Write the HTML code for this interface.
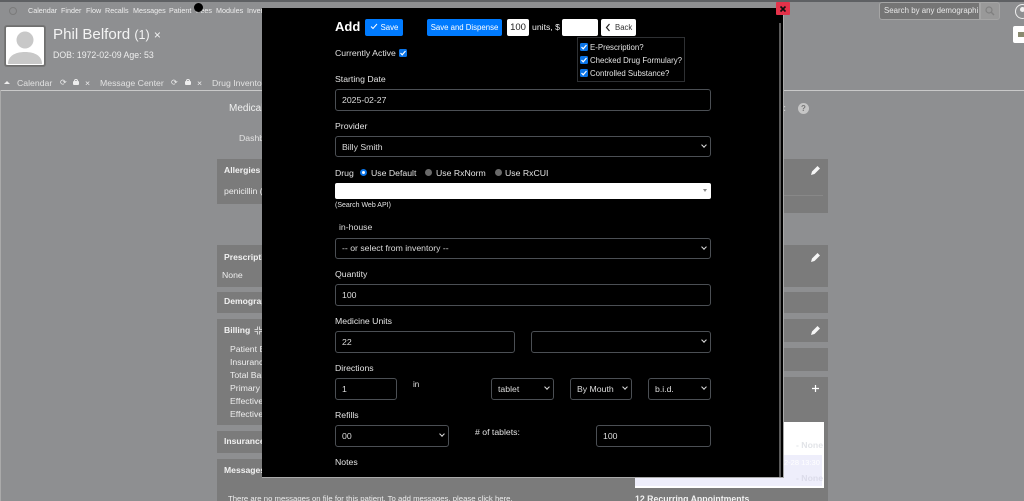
<!DOCTYPE html>
<html><head><meta charset="utf-8"><style>
*{box-sizing:border-box}
html,body{margin:0;padding:0;width:1024px;height:501px;overflow:hidden}
body{position:relative;background:#8e8f91;font-family:"Liberation Sans",sans-serif;font-size:8.7px;color:#e8e8e8}
.a{position:absolute}
.t{position:absolute;white-space:nowrap;line-height:16px;height:16px}
.p{position:absolute;background:#7b7b7b}
.n{font-size:7.2px;color:#eee}
.b{font-weight:bold;color:#f2f2f2;font-size:8.6px}
#m{position:absolute;left:262px;top:8px;width:521px;height:469px;background:#000;overflow:hidden;color:#e4e4e4;font-size:8.7px}
#m .f{position:absolute;border:1px solid #4b4f54;border-radius:3px;background:#000;color:#ddd;line-height:20px;padding-left:6px;font-size:8.7px;height:22px;white-space:nowrap}
#m .s::after{content:"";position:absolute;right:4px;top:6px;width:3px;height:3px;border-right:1px solid #ddd;border-bottom:1px solid #ddd;transform:rotate(45deg)}
.btn{position:absolute;background:#007bff;color:#fff;border-radius:2px;font-size:7.8px;text-align:center;height:17px;line-height:17px;white-space:nowrap}
.w{position:absolute;background:#fff;color:#222;border-radius:2px}
.c{position:absolute;width:8px;height:8px;background:#0a74e8;border-radius:1.5px}
.c svg{position:absolute;left:0;top:0}
.r{position:absolute;width:7px;height:7px;border-radius:50%;background:#6a6a6a}
</style></head><body>
<!-- background page -->
<div class="a" style="left:0;top:0;width:1024px;height:2px;background:#5e6063"></div>
<div class="a" style="left:9px;top:7px;width:8px;height:8px;border-radius:50%;border:1px solid #7b7b7b"></div>
<div class="t n" style="left:28px;top:3px">Calendar</div>
<div class="t n" style="left:61px;top:3px">Finder</div>
<div class="t n" style="left:86px;top:3px">Flow</div>
<div class="t n" style="left:105px;top:3px">Recalls</div>
<div class="t n" style="left:133px;top:3px">Messages</div>
<div class="t n" style="left:169px;top:3px">Patient</div>
<div class="t n" style="left:196px;top:3px">Fees</div>
<div class="t n" style="left:216px;top:3px">Modules</div>
<div class="t n" style="left:247px;top:3px">Inventory</div>
<div class="a" style="left:194px;top:3px;width:9px;height:9px;border-radius:50%;background:#000"></div>

<div class="a" style="left:5px;top:26px;width:40px;height:40px;background:#fff;border:1px solid #6f6f6f;border-radius:2px;overflow:hidden;box-shadow:0 0 0 1px #777">
<svg width="38" height="38" viewBox="0 0 38 38"><circle cx="19" cy="13" r="8.5" fill="#c8c8c8"/><path d="M2 37C2 29 9 25 19 25S36 29 36 37Z" fill="#c8c8c8"/></svg></div>
<div class="t" style="left:53px;top:25px;height:20px;line-height:20px;font-size:15.1px;color:#f4f4f4">Phil Belford <span style="font-size:12.5px">(1)</span> <span style="font-size:12px">×</span></div>
<div class="t" style="left:53px;top:47px;font-size:8.75px;color:#eee">DOB: 1972-02-09 Age: 53</div>

<div class="a" style="left:4px;top:81px;width:0;height:0;border-left:3px solid transparent;border-right:3px solid transparent;border-bottom:3px solid #eee"></div>
<div class="t" style="left:17px;top:75px;color:#e2e2e2">Calendar</div>
<div class="t" style="left:60px;top:75px;font-size:8px;color:#eee">⟳</div>
<div class="a" style="left:73px;top:81px;width:6px;height:4px;background:#eee;border-radius:1px"></div>
<div class="a" style="left:74px;top:79px;width:4px;height:3px;border:1px solid #eee;border-bottom:0;border-radius:2px 2px 0 0"></div>
<div class="t" style="left:85px;top:75px;color:#eee">×</div>
<div class="t" style="left:100px;top:75px;color:#e2e2e2">Message Center</div>
<div class="t" style="left:171px;top:75px;font-size:8px;color:#eee">⟳</div>
<div class="a" style="left:185px;top:81px;width:6px;height:4px;background:#eee;border-radius:1px"></div>
<div class="a" style="left:186px;top:79px;width:4px;height:3px;border:1px solid #eee;border-bottom:0;border-radius:2px 2px 0 0"></div>
<div class="t" style="left:197px;top:75px;color:#eee">×</div>
<div class="t" style="left:212px;top:75px;color:#e2e2e2">Drug Inventory</div>
<div class="a" style="left:0;top:90px;width:1024px;height:1px;background:#c9c9c9"></div>
<div class="a" style="left:0;top:90px;width:1px;height:411px;background:#aaa"></div>

<div class="t" style="left:229px;top:101px;font-size:10px;color:#f0f0f0">Medical</div>
<div class="t" style="left:239px;top:130px;color:#e4e4e4">Dashboard</div>

<div class="p" style="left:217px;top:159px;width:611px;height:45px"></div>
<div class="p" style="left:783px;top:204px;width:45px;height:9px"></div>
<div class="a" style="left:783px;top:195px;width:40px;height:1px;background:#888"></div>
<div class="t b" style="left:224px;top:162px">Allergies</div>
<div class="t" style="left:224px;top:183px;color:#eee">penicillin (</div>

<div class="p" style="left:217px;top:245px;width:611px;height:42px"></div>
<div class="t b" style="left:224px;top:249px">Prescriptions</div>
<div class="t" style="left:222px;top:267px;color:#eee">None</div>

<div class="p" style="left:217px;top:292px;width:611px;height:21px"></div>
<div class="t b" style="left:224px;top:293px">Demographics</div>

<div class="p" style="left:217px;top:319px;width:45px;height:106px"></div>
<div class="p" style="left:783px;top:319px;width:45px;height:23px"></div>
<div class="t b" style="left:224px;top:322px">Billing</div>
<svg class="a" style="left:254px;top:326px" width="9" height="9" viewBox="0 0 9 9"><path d="M0.5 3.5H3.5V0.5M5.5 0.5V3.5H8.5M0.5 5.5H3.5V8.5M5.5 8.5V5.5H8.5" stroke="#eee" fill="none" stroke-width="0.8"/></svg>
<div class="t" style="left:230px;top:341px;color:#eee">Patient Balance</div>
<div class="t" style="left:230px;top:354px;color:#eee">Insurance</div>
<div class="t" style="left:230px;top:367px;color:#eee">Total Balance</div>
<div class="t" style="left:230px;top:380px;color:#eee">Primary</div>
<div class="t" style="left:230px;top:393px;color:#eee">Effective</div>
<div class="t" style="left:230px;top:406px;color:#eee">Effective</div>

<div class="p" style="left:217px;top:431px;width:45px;height:22px"></div>
<div class="p" style="left:783px;top:348px;width:45px;height:23px"></div>
<div class="t b" style="left:224px;top:433px">Insurance</div>

<div class="p" style="left:217px;top:459px;width:418px;height:42px"></div>
<div class="t b" style="left:224px;top:462px">Messages</div>
<div class="t" style="left:228px;top:491px;color:#eee;font-size:7.75px">There are no messages on file for this patient. To add messages, please click here.</div>

<div class="p" style="left:635px;top:377px;width:193px;height:124px"></div>
<div class="a" style="left:635px;top:422px;width:189px;height:66px;background:#fff"></div>
<div class="a" style="left:635px;top:455px;width:187px;height:31px;background:#eeeefb"></div>
<div class="t" style="left:796px;top:437px;color:#e2e4e8;font-size:8.7px;font-weight:bold">- None</div>
<div class="t" style="left:796px;top:470px;color:#dcdcea;font-size:8.7px;font-weight:bold">- None</div>
<div class="t" style="left:784px;top:455px;color:#fff;font-size:7.5px">2-28 13:30</div>
<div class="t b" style="left:635px;top:491px;font-size:8.75px">12 Recurring Appointments</div>

<!-- pencils -->
<svg class="a" style="left:810px;top:165px" width="11" height="11" viewBox="0 0 11 11"><path d="M1 10L2 6.5L7.5 1L10 3.5L4.5 9Z" fill="#f6f6f6"/></svg>
<svg class="a" style="left:810px;top:252px" width="11" height="11" viewBox="0 0 11 11"><path d="M1 10L2 6.5L7.5 1L10 3.5L4.5 9Z" fill="#f6f6f6"/></svg>
<svg class="a" style="left:810px;top:325px" width="11" height="11" viewBox="0 0 11 11"><path d="M1 10L2 6.5L7.5 1L10 3.5L4.5 9Z" fill="#f6f6f6"/></svg>
<svg class="a" style="left:811px;top:384px" width="9" height="9" viewBox="0 0 9 9"><path d="M4.5 1V8M1 4.5H8" stroke="#fff" stroke-width="1.2"/></svg>
<div class="a" style="left:798px;top:103px;width:11px;height:11px;border-radius:50%;background:#c6c6c6;color:#777;font-size:8px;line-height:11px;text-align:center;font-weight:bold">?</div>
<div class="t" style="left:783px;top:100px;color:#ccc;font-size:9px;font-weight:bold">:</div>

<!-- search -->
<div class="a" style="left:879px;top:2px;width:101px;height:18px;background:#757575;border:1px solid #a5a5a5;border-radius:3px 0 0 3px;color:#e8e8e8;font-size:7.9px;line-height:16px;padding-left:4px;overflow:hidden;white-space:nowrap">Search by any demographi</div>
<div class="a" style="left:980px;top:2px;width:20px;height:18px;background:#999;border:1px solid #a5a5a5;border-radius:0 3px 3px 0"></div>
<svg class="a" style="left:985px;top:6px" width="10" height="10" viewBox="0 0 10 10"><circle cx="4" cy="4" r="3" fill="none" stroke="#808080" stroke-width="1.2"/><path d="M6 6L9 9" stroke="#808080" stroke-width="1.4"/></svg>
<div class="a" style="left:1015px;top:4px;width:15px;height:15px;border-radius:50%;border:1.5px solid #eee;background:#8e8f91"></div>
<div class="a" style="left:1020px;top:7px;width:5px;height:5px;border-radius:50%;background:#eee"></div>
<div class="a" style="left:1013px;top:26px;width:14px;height:17px;background:#fff;border-radius:2px"></div>
<div class="a" style="left:1018px;top:32px;width:8px;height:5px;background:#8a8a70"></div>

<!-- modal -->
<div class="a" style="left:262px;top:8px;width:522px;height:470px;background:#000;border-right:1px solid #aaa;border-bottom:1px solid #aaa"></div>
<div id="m">
  <div class="t" style="left:73px;top:11px;font-size:13px;font-weight:bold;color:#fff">Add</div>
  <div class="btn" style="left:103px;top:11px;width:38px"><svg width="8" height="7" viewBox="0 0 8 7" style="margin-right:3px"><path d="M1 3.5L3 5.5L7 1" stroke="#fff" fill="none" stroke-width="1"/></svg>Save</div>
  <div class="btn" style="left:165px;top:11px;width:75px">Save and Dispense</div>
  <div class="w" style="left:245px;top:11px;width:22px;height:17px;line-height:17px;text-align:center;font-size:9.5px">100</div>
  <div class="t" style="left:270px;top:11px;font-size:8.7px;color:#eee">units, $</div>
  <div class="w" style="left:300px;top:11px;width:36px;height:17px"></div>
  <div class="w" style="left:339px;top:11px;width:35px;height:17px;line-height:17px;font-size:7.8px;padding-left:14px;color:#333">Back</div>
  <svg class="a" style="left:343px;top:15px" width="6" height="9" viewBox="0 0 6 9"><path d="M4.5 1L1.5 4.5L4.5 8" stroke="#222" fill="none" stroke-width="1.2"/></svg>

  <div class="t" style="left:73px;top:37px">Currently Active</div>
  <div class="c" style="left:137px;top:41px"><svg width="8" height="8" viewBox="0 0 8 8"><path d="M1.5 4L3.2 5.8L6.5 2" stroke="#fff" fill="none" stroke-width="1.2"/></svg></div>

  <div class="a" style="left:315px;top:29px;width:108px;height:45px;border:1px solid #2e3033;background:#000"></div>
  <div class="c" style="left:318px;top:35px"><svg width="8" height="8" viewBox="0 0 8 8"><path d="M1.5 4L3.2 5.8L6.5 2" stroke="#fff" fill="none" stroke-width="1.2"/></svg></div>
  <div class="t" style="left:328px;top:32px;font-size:7.85px">E-Prescription?</div>
  <div class="c" style="left:318px;top:48px"><svg width="8" height="8" viewBox="0 0 8 8"><path d="M1.5 4L3.2 5.8L6.5 2" stroke="#fff" fill="none" stroke-width="1.2"/></svg></div>
  <div class="t" style="left:328px;top:45px;font-size:7.85px">Checked Drug Formulary?</div>
  <div class="c" style="left:318px;top:61px"><svg width="8" height="8" viewBox="0 0 8 8"><path d="M1.5 4L3.2 5.8L6.5 2" stroke="#fff" fill="none" stroke-width="1.2"/></svg></div>
  <div class="t" style="left:328px;top:58px;font-size:7.85px">Controlled Substance?</div>

  <div class="t" style="left:73px;top:63px">Starting Date</div>
  <div class="f" style="left:73px;top:81px;width:376px">2025-02-27</div>

  <div class="t" style="left:73px;top:110px">Provider</div>
  <div class="f s" style="left:73px;top:128px;width:376px;height:21px;line-height:20px">Billy Smith</div>

  <div class="t" style="left:73px;top:157px">Drug</div>
  <div class="r" style="left:98px;top:161px;background:#fff;border:2px solid #0a74e8"></div>
  <div class="t" style="left:109px;top:157px">Use Default</div>
  <div class="r" style="left:163px;top:161px"></div>
  <div class="t" style="left:174px;top:157px">Use RxNorm</div>
  <div class="r" style="left:233px;top:161px"></div>
  <div class="t" style="left:243px;top:157px">Use RxCUI</div>
  <div class="a" style="left:73px;top:175px;width:376px;height:16px;background:#fff;border-radius:2px"></div>
  <div class="a" style="left:441px;top:181px;width:0;height:0;border-left:2.5px solid transparent;border-right:2.5px solid transparent;border-top:3px solid #888"></div>
  <div class="t" style="left:73px;top:190px;font-size:7px">(Search Web API)</div>

  <div class="t" style="left:77px;top:211px;color:#ddd">in-house</div>
  <div class="f s" style="left:73px;top:230px;width:376px;height:21px;line-height:19px">-- or select from inventory --</div>

  <div class="t" style="left:73px;top:258px">Quantity</div>
  <div class="f" style="left:73px;top:276px;width:376px">100</div>

  <div class="t" style="left:73px;top:305px">Medicine Units</div>
  <div class="f" style="left:73px;top:323px;width:180px">22</div>
  <div class="f s" style="left:269px;top:323px;width:180px"></div>

  <div class="t" style="left:73px;top:352px">Directions</div>
  <div class="f" style="left:73px;top:370px;width:62px">1</div>
  <div class="t" style="left:151px;top:369px;font-size:8px">in</div>
  <div class="f s" style="left:229px;top:370px;width:63px">tablet</div>
  <div class="f s" style="left:308px;top:370px;width:62px">By Mouth</div>
  <div class="f s" style="left:386px;top:370px;width:63px">b.i.d.</div>

  <div class="t" style="left:73px;top:399px">Refills</div>
  <div class="f s" style="left:73px;top:417px;width:114px">00</div>
  <div class="t" style="left:213px;top:416px"># of tablets:</div>
  <div class="f" style="left:334px;top:417px;width:115px">100</div>

  <div class="t" style="left:73px;top:446px">Notes</div>
  <div class="a" style="left:517px;top:15px;width:2px;height:454px;background:#5a5a5a"></div>
</div>
<div class="a" style="left:776px;top:2px;width:14px;height:13px;background:#e4324a;border-radius:1px"></div>
<svg class="a" style="left:779px;top:5px" width="8" height="8" viewBox="0 0 8 8"><path d="M1.5 1.5L6.5 6.5M6.5 1.5L1.5 6.5" stroke="#111" stroke-width="1.6"/></svg>
</body></html>
